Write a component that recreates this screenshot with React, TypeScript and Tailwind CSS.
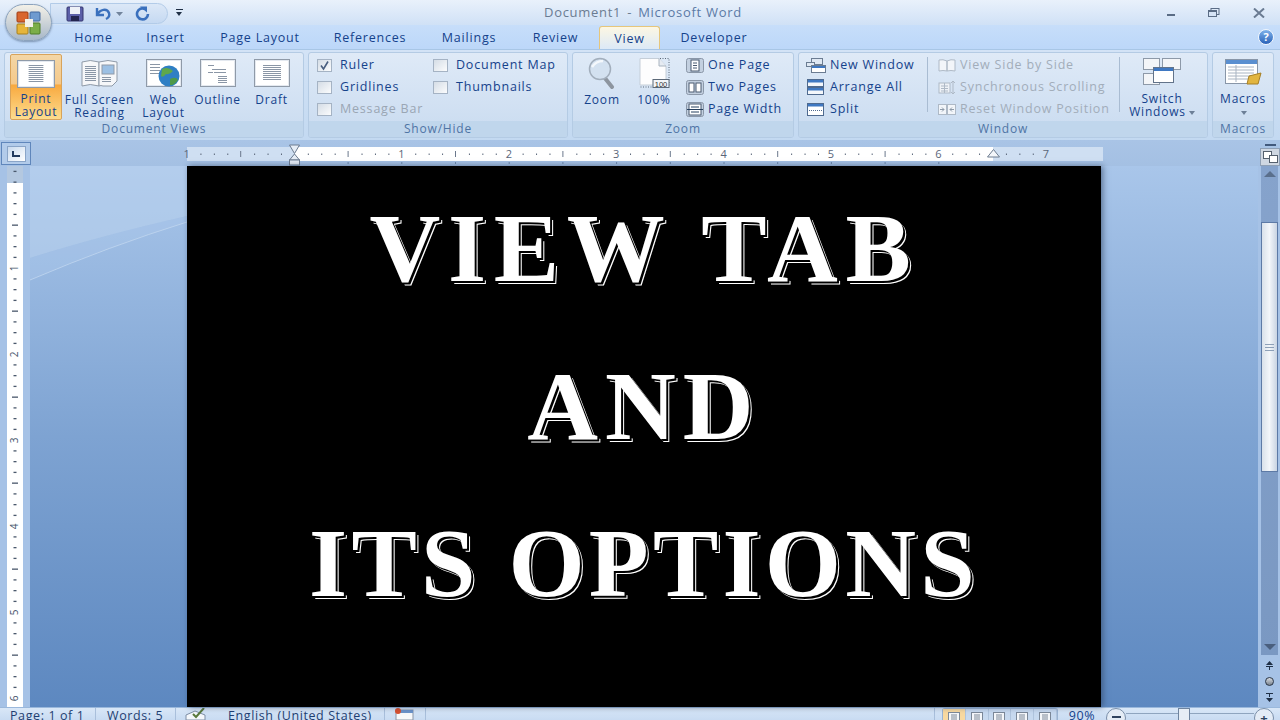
import React from "react";

const F = "font-['Open_Sans','Noto_Sans',sans-serif]";

function Sheet({ children, w = 38, h = 28 }: { children?: React.ReactNode; w?: number; h?: number }) {
  return (
    <svg width={w} height={h} viewBox="0 0 36 28" preserveAspectRatio="none">
      <rect x="0.5" y="0.5" width="35" height="27" fill="#e4e9f0" stroke="#8f9aa8" />
      <rect x="2" y="2" width="32" height="24" fill="#ffffff" />
      {children}
    </svg>
  );
}

function Lines({ x = 10, y = 6, w = 16, n = 8, gap = 2 }: { x?: number; y?: number; w?: number; n?: number; gap?: number }) {
  return (
    <>
      {Array.from({ length: n }, (_, i) => (
        <line key={i} x1={x} x2={x + w} y1={y + i * gap + 0.5} y2={y + i * gap + 0.5} stroke="#8a96a6" strokeWidth="1" />
      ))}
    </>
  );
}

function Caret() {
  return <span className="inline-block align-middle ml-[3px] w-0 h-0 border-l-[3.5px] border-r-[3.5px] border-t-[4px] border-l-transparent border-r-transparent border-t-[#6d7f97]" />;
}

function BigBtn({ icon, lines, active, w }: { icon: React.ReactNode; lines: React.ReactNode[]; active?: boolean; w: string }) {
  return (
    <div
      className={`${w} h-[66px] flex flex-col items-center shrink-0 rounded-[2px] ${
        active ? "bg-[linear-gradient(180deg,#f3d6a6_0%,#f5c98a_45%,#f8a93f_47%,#fddc8e_100%)] border border-[#d8a35a]" : ""
      }`}
    >
      <div className="h-[34px] mt-[2px] flex items-center justify-center">{icon}</div>
      <div className={`text-[12px] leading-[13px] text-center text-[#15428b] whitespace-nowrap ${active ? "mt-[1px]" : "mt-[3px]"}`}>
        {lines.map((l, i) => (
          <div key={i}>{l}</div>
        ))}
      </div>
    </div>
  );
}

function Group({ label, w, children }: { label: string; w: string; children: React.ReactNode }) {
  return (
    <div className={`${w} h-[86px] shrink-0 rounded-[3px] border border-[#b4cbe4] bg-gradient-to-b from-[#dfeaf7] to-[#c9dbf0] flex flex-col overflow-hidden`}>
      <div className="flex-1 flex min-h-0">{children}</div>
      <div className="h-[16px] bg-[#c0d6ec] text-center text-[12px] leading-[16px] text-[#4f74a5]">{label}</div>
    </div>
  );
}

function Check({ label, checked, disabled }: { label: string; checked?: boolean; disabled?: boolean }) {
  return (
    <div className="h-[22px] flex items-center gap-[8px]">
      <div className="w-[15px] h-[13px] border border-[#a5b3c4] bg-gradient-to-br from-[#d5dde6] to-[#fbfcfd] flex items-center justify-center">
        {checked && (
          <svg width="11" height="11" viewBox="0 0 11 11">
            <path d="M2 5.5 L4.5 9 L9 1.5" fill="none" stroke="#4a5f80" strokeWidth="1.6" />
          </svg>
        )}
      </div>
      <span className={`text-[12.5px] whitespace-nowrap ${disabled ? "text-[#9aa6b4]" : "text-[#15428b]"}`}>{label}</span>
    </div>
  );
}

function SmallRow({ icon, label, disabled, w = "w-[19px]" }: { icon: React.ReactNode; label: string; disabled?: boolean; w?: string }) {
  return (
    <div className="h-[22px] flex items-center gap-[4px]">
      <div className={`${w} h-[18px] flex items-center justify-center`}>{icon}</div>
      <span className={`text-[12.5px] whitespace-nowrap ${disabled ? "text-[#a2adba]" : "text-[#15428b]"}`}>{label}</span>
    </div>
  );
}

function Tab({ label, active, w }: { label: string; active?: boolean; w: string }) {
  return (
    <div
      className={`${w} h-[23px] text-center text-[12.5px] text-[#15428b] shrink-0 ${
        active ? "bg-gradient-to-b from-[#fdf7e3] to-[#dce9f7] border border-b-0 border-[#e6c67c] rounded-t-[3px] leading-[23px] ml-[5px]" : "leading-[24px]"
      }`}
    >
      {label}
    </div>
  );
}

function HRuler() {
  const items: React.ReactNode[] = [];
  const inch = 107.4;
  for (let i = 0; i <= 64; i++) {
    const x = i * (inch / 8);
    if (x > 905) break;
    if (i % 8 === 0) {
      const n = i / 8;
      if (n !== 1) {
        items.push(
          <text key={i} x={x} y="10.5" fontSize="11" fill="#5a6679" textAnchor="middle" fontFamily="Open Sans">
            {n === 0 ? 1 : n - 1}
          </text>
        );
      }
    } else if (i % 4 === 0) {
      items.push(<line key={i} x1={x} x2={x} y1="4" y2="10" stroke="#6b788c" />);
    } else {
      items.push(<rect key={i} x={x} y="6.5" width="1" height="1.5" fill="#5a6679" />);
    }
    if (i % 4 === 0 && x > 120 && x < 800) {
      items.push(<line key={`t${i}`} x1={x} x2={x} y1="15" y2="17" stroke="#6b86a8" />);
    }
  }
  return (
    <svg width="916" height="14" viewBox="0 0 916 14" className="block overflow-visible">
      {items}
      <g fill="#e6edf6" stroke="#6d7c90">
        <path d="M102.5 -2 h10 l-5 8.5 z" />
        <path d="M107.5 7 l5 6 h-10 z" />
        <rect x="102.5" y="13" width="10" height="5" />
        <path d="M806.5 2.5 l6 7.5 h-12 z" fill="#f3f6fa" />
      </g>
    </svg>
  );
}

function VRuler() {
  const rows: React.ReactNode[] = [];
  for (let i = -1; i < 50; i++) {
    const y = 15.5 + i * 10.75;
    const mod = ((i % 8) + 8) % 8;
    if (mod === 0 && i > 0) continue;
    rows.push(<rect key={i} x={mod === 4 ? 5 : 6.5} y={y} width={mod === 4 ? 6 : 3} height="1.3" fill="#4a586c" />);
  }
  const nums = [1, 2, 3, 4, 5, 6];
  return (
    <svg width="16" height="541" viewBox="0 0 16 541" className="block">
      <rect x="0" y="0" width="16" height="17" fill="#b4c8e0" />
      <rect x="0" y="17" width="16" height="524" fill="#ffffff" />
      {rows}
      {nums.map((n) => (
        <text key={n} x="8" y={16 + 86 * n} fontSize="10" fill="#45536a" textAnchor="middle" dominantBaseline="middle" fontFamily="Open Sans" transform={`rotate(-90 8 ${16 + 86 * n})`}>
          {n}
        </text>
      ))}
    </svg>
  );
}

export default function App() {
  return (
    <div className={`${F} tracking-[0.8px] w-[1280px] h-[720px] overflow-hidden flex flex-col relative bg-[#6a93c6]`}>
      {/* Title bar */}
      <div className="h-[25px] shrink-0 bg-gradient-to-b from-[#e9f1fb] to-[#d0e1f6] flex items-center relative">
        <div className="w-[544px] shrink-0" />
        <div className="flex-1 text-[13px] tracking-[0.7px] text-[#6b7c92] whitespace-nowrap">
          Document1 <span className="ml-[2px]">-</span> <span className="text-[#5b7aa5] ml-[2px]">Microsoft Word</span>
        </div>
        <div className="flex items-center gap-[33px] pr-[15px]">
          <div className="w-[8px] h-[2px] bg-[#5a6c85] mt-[4px]" />
          <svg width="12" height="10" viewBox="0 0 12 10">
            <rect x="3" y="0.5" width="8" height="6" fill="none" stroke="#5a6c85" />
            <rect x="0.5" y="2.5" width="8" height="6" fill="#d6e4f6" stroke="#5a6c85" />
            <rect x="0.5" y="2" width="8" height="2" fill="#5a6c85" />
          </svg>
          <svg width="12" height="10" viewBox="0 0 12 10">
            <path d="M1 0.5 L11 9.5 M11 0.5 L1 9.5" stroke="#6a7b92" strokeWidth="2" />
          </svg>
        </div>
      </div>

      {/* Tabs */}
      <div className="h-[25px] shrink-0 bg-gradient-to-b from-[#c7defa] to-[#bcd7f9] flex items-end border-b border-[#a8c6e6]">
        <div className="w-[57px] shrink-0" />
        <Tab label="Home" w="w-[73px]" />
        <Tab label="Insert" w="w-[71px]" />
        <Tab label="Page Layout" w="w-[118px]" />
        <Tab label="References" w="w-[102px]" />
        <Tab label="Mailings" w="w-[96px]" />
        <Tab label="Review" w="w-[77px]" />
        <Tab label="View" active w="w-[61px]" />
        <Tab label="Developer" w="w-[108px]" />
        <div className="flex-1" />
        <div className="w-[16px] h-[16px] rounded-full bg-gradient-to-b from-[#7fb2ea] to-[#2a62b8] border border-[#f0f6fd] text-white text-[11px] leading-[14px] tracking-normal text-center font-bold mr-[6px] mb-[4px]">
          ?
        </div>
      </div>

      {/* Ribbon */}
      <div className="h-[90px] shrink-0 bg-gradient-to-b from-[#d3e3f6] to-[#c3d9f1] flex items-start gap-[4px] pl-[4px] pt-[2px]">
        <Group label="Document Views" w="w-[300px]">
          <div className="flex items-start pl-[5px] pt-[1px]">
            <BigBtn
              active
              w="w-[52px]"
              lines={["Print", "Layout"]}
              icon={
                <Sheet>
                  <Lines x={11} y={5} w={14} n={9} />
                </Sheet>
              }
            />
            <BigBtn
              w="w-[75px]"
              lines={["Full Screen", "Reading"]}
              icon={
                <svg width="37" height="28" viewBox="0 0 37 28">
                  <path d="M1 3 Q9 0 18 3 V27 Q9 24 1 27 Z" fill="#f6f7f9" stroke="#8f9aa8" />
                  <path d="M18 3 Q27 0 36 3 V22 L31 27 H22 Q20 26 18 27 Z" fill="#f6f7f9" stroke="#8f9aa8" />
                  <Lines x={4} y={7} w={11} n={8} />
                  <rect x="21" y="6" width="12" height="9" fill="#9cc0e4" stroke="#8f9aa8" />
                  <Lines x={21} y={18} w={9} n={3} />
                </svg>
              }
            />
            <BigBtn
              w="w-[53px]"
              lines={["Web", "Layout"]}
              icon={
                <Sheet w={36}>
                  <Lines x={4} y={5} w={10} n={4} gap={3} />
                  <circle cx="23" cy="17" r="10.5" fill="#2f7fc4" />
                  <path d="M16 10 Q22 7 27 12 Q24 16 20 15 Q17 19 15 17 Z" fill="#5fa84a" />
                  <path d="M24 20 Q30 17 32 21 Q28 27 24 26 Z" fill="#4f9a48" />
                </Sheet>
              }
            />
            <BigBtn
              w="w-[55px]"
              lines={["Outline"]}
              icon={
                <Sheet w={36}>
                  <Lines x={8} y={6} w={6} n={1} />
                  <Lines x={12} y={10} w={14} n={1} />
                  <Lines x={8} y={13} w={5} n={1} />
                  <Lines x={14} y={13} w={12} n={1} />
                  <Lines x={18} y={17} w={9} n={4} />
                </Sheet>
              }
            />
            <BigBtn
              w="w-[53px]"
              lines={["Draft"]}
              icon={
                <Sheet w={36}>
                  <Lines x={9} y={6} w={18} n={8} />
                </Sheet>
              }
            />
          </div>
        </Group>

        <Group label="Show/Hide" w="w-[260px]">
          <div className="pl-[8px] pt-[1px] w-[124px] shrink-0">
            <Check label="Ruler" checked />
            <Check label="Gridlines" />
            <Check label="Message Bar" disabled />
          </div>
          <div className="pt-[1px]">
            <Check label="Document Map" />
            <Check label="Thumbnails" />
          </div>
        </Group>

        <Group label="Zoom" w="w-[222px]">
          <div className="flex items-start pl-[3px] pt-[1px]">
            <BigBtn
              w="w-[52px]"
              lines={["Zoom"]}
              icon={
                <svg width="28" height="32" viewBox="0 0 28 32">
                  <path d="M16 20 L24 30" stroke="#8d959f" strokeWidth="4" strokeLinecap="round" />
                  <circle cx="12" cy="12" r="10.5" fill="#d3e1f0" stroke="#a2aebc" strokeWidth="1.5" />
                  <path d="M4 10 Q8 4 15 4" fill="none" stroke="#f4f8fc" strokeWidth="2.5" />
                </svg>
              }
            />
            <BigBtn
              w="w-[52px]"
              lines={["100%"]}
              icon={
                <svg width="32" height="30" viewBox="0 0 32 30">
                  <path d="M2 0.5 H31 V29 H2" fill="none" stroke="#5b6878" strokeDasharray="1 1.5" />
                  <path d="M2 0.5 H21 L28 8 V27 H2 Z" fill="#fdfdfe" stroke="#c5ced8" />
                  <path d="M21 0.5 V8 H28" fill="#e6ebf2" stroke="#a9b4c0" />
                  <rect x="15" y="21.5" width="16" height="8" fill="#f4f6f9" stroke="#5b6878" />
                  <text x="23" y="28.5" fontSize="7.5" fill="#333" textAnchor="middle" fontFamily="Liberation Sans" className="tracking-normal">
                    100
                  </text>
                </svg>
              }
            />
            <div className="pl-[5px]">
              <SmallRow
                label="One Page"
                icon={
                  <svg width="18" height="15" viewBox="0 0 18 15">
                    <rect x="0.5" y="0.5" width="17" height="14" rx="2" fill="#c3d0e0" stroke="#8a97a8" />
                    <rect x="5" y="2" width="8" height="11" fill="#fff" stroke="#4b5a70" />
                    <path d="M7 5 h4 M7 7.5 h4 M7 10 h4" stroke="#4b5a70" />
                  </svg>
                }
              />
              <SmallRow
                label="Two Pages"
                icon={
                  <svg width="18" height="15" viewBox="0 0 18 15">
                    <rect x="0.5" y="0.5" width="17" height="14" rx="2" fill="#c3d0e0" stroke="#8a97a8" />
                    <rect x="3" y="3" width="5" height="9" fill="#fff" stroke="#4b5a70" />
                    <rect x="10" y="3" width="5" height="9" fill="#fff" stroke="#4b5a70" />
                  </svg>
                }
              />
              <SmallRow
                label="Page Width"
                icon={
                  <svg width="18" height="15" viewBox="0 0 18 15">
                    <rect x="0.5" y="0.5" width="17" height="14" rx="2" fill="#c3d0e0" stroke="#8a97a8" />
                    <rect x="3" y="2" width="12" height="11" fill="#fff" stroke="#4b5a70" />
                    <path d="M1 7.5 h16 M5 5 h8 M5 10 h8" stroke="#27405f" />
                  </svg>
                }
              />
            </div>
          </div>
        </Group>

        <Group label="Window" w="w-[410px]">
          <div className="pl-[6px] pt-[1px] w-[128px] shrink-0">
            <SmallRow
              w="w-[21px]"
              label="New Window"
              icon={
                <svg width="20" height="15" viewBox="0 0 20 15">
                  <rect x="5.5" y="0.5" width="11" height="6" fill="#dfe8f3" stroke="#6b7c92" />
                  <rect x="0.5" y="4.5" width="8" height="4" fill="#dfe8f3" stroke="#6b7c92" />
                  <rect x="5.5" y="7.5" width="14" height="7" fill="#fff" stroke="#6b7c92" />
                  <rect x="6" y="8" width="13" height="2" fill="#3f78c2" />
                </svg>
              }
            />
            <SmallRow
              w="w-[21px]"
              label="Arrange All"
              icon={
                <svg width="17" height="16" viewBox="0 0 17 16">
                  <rect x="0.5" y="0.5" width="16" height="7" fill="#f4f7fb" stroke="#4f6a8f" />
                  <rect x="1" y="1" width="15" height="2.5" fill="#3f78c2" />
                  <rect x="0.5" y="8.5" width="16" height="7" fill="#f4f7fb" stroke="#4f6a8f" />
                  <rect x="1" y="9" width="15" height="2.5" fill="#3f78c2" />
                </svg>
              }
            />
            <SmallRow
              w="w-[21px]"
              label="Split"
              icon={
                <svg width="17" height="13" viewBox="0 0 17 13">
                  <rect x="0.5" y="0.5" width="16" height="12" fill="#fff" stroke="#4f6a8f" />
                  <rect x="1" y="1" width="15" height="2.5" fill="#3f78c2" />
                  <path d="M2 7.5 h13" stroke="#4f6a8f" strokeDasharray="1 1" />
                </svg>
              }
            />
          </div>
          <div className="w-px h-[55px] bg-[#a9bcd2] mt-[4px] shrink-0" />
          <div className="pl-[9px] pt-[1px] w-[191px] shrink-0">
            <SmallRow
              label="View Side by Side"
              disabled
              icon={
                <svg width="18" height="13" viewBox="0 0 18 13">
                  <path d="M1 1 Q5 0 9 2 V12 Q5 11 1 12 Z M9 2 Q13 0 17 1 V12 Q13 11 9 12 Z" fill="#f2f5f9" stroke="#aeb9c6" />
                </svg>
              }
            />
            <SmallRow
              label="Synchronous Scrolling"
              disabled
              icon={
                <svg width="18" height="15" viewBox="0 0 18 15">
                  <rect x="1" y="3" width="11" height="10" fill="#eef2f7" stroke="#aeb9c6" />
                  <path d="M3 6 h7 M3 8.5 h7 M3 11 h7 M6.5 3 v10" stroke="#aeb9c6" />
                  <path d="M15 1 v13 M13 3 l2 -2 l2 2 M13 12 l2 2 l2 -2" fill="none" stroke="#aeb9c6" />
                </svg>
              }
            />
            <SmallRow
              label="Reset Window Position"
              disabled
              icon={
                <svg width="18" height="13" viewBox="0 0 18 13">
                  <rect x="0.5" y="1.5" width="8" height="10" fill="#f2f5f9" stroke="#aeb9c6" />
                  <rect x="9.5" y="1.5" width="8" height="10" fill="#f2f5f9" stroke="#aeb9c6" />
                  <path d="M2 6.5 h4 M4 4.5 l2 2 l-2 2 M16 6.5 h-4 M14 4.5 l-2 2 l2 2" fill="none" stroke="#8d9aa9" />
                </svg>
              }
            />
          </div>
          <div className="w-px h-[55px] bg-[#a9bcd2] mt-[4px] shrink-0" />
          <BigBtn
            w="w-[84px]"
            lines={[
              "Switch",
              <>
                Windows
                <Caret />
              </>,
            ]}
            icon={
              <svg width="38" height="28" viewBox="0 0 38 28">
                <rect x="0.5" y="0.5" width="16" height="11" fill="#f3f5f8" stroke="#8d99a8" />
                <rect x="19.5" y="0.5" width="18" height="11" fill="#f3f5f8" stroke="#8d99a8" />
                <rect x="0.5" y="15.5" width="16" height="11" fill="#f3f5f8" stroke="#8d99a8" />
                <rect x="10.5" y="9.5" width="20" height="15" fill="#fff" stroke="#62738a" />
                <rect x="11" y="10" width="19" height="3" fill="#3f78c2" />
              </svg>
            }
          />
        </Group>

        <Group label="Macros" w="w-[62px]">
          <BigBtn
            w="w-[60px]"
            lines={["Macros", <Caret key="c" />]}
            icon={
              <svg width="37" height="26" viewBox="0 0 37 26">
                <rect x="0.5" y="0.5" width="32" height="24" fill="#fff" stroke="#8896a8" />
                <rect x="1" y="1" width="31" height="4" fill="#5a8fd0" />
                <path d="M3 8 h26 M3 11 h26 M3 14 h26 M3 17 h26 M3 20 h26 M11 6 v17" stroke="#a9b4c2" />
                <path d="M24 17 L36 14 L33 25 H22 Z" fill="#e2b53f" stroke="#a67f25" />
              </svg>
            }
          />
        </Group>
      </div>

      {/* Ruler row */}
      <div className="h-[26px] shrink-0 bg-gradient-to-b from-[#a9c4e6] to-[#a4c0e3] flex relative">
        <div className="w-[187px] shrink-0 pl-[1px] pt-[2px]">
          <div className="w-[30px] h-[23px] border border-[#5f86bb] bg-[#b2cbea] flex items-center justify-center">
            <div className="w-[19px] h-[16px] border border-[#8aa5c8] bg-gradient-to-br from-[#c9daee] to-[#ffffff] flex items-center justify-center">
              <div className="w-[8px] h-[6px] border-l-2 border-b-2 border-[#223a5e]" />
            </div>
          </div>
        </div>
        <div className="w-[916px] shrink-0 h-[14px] mt-[7px] bg-white relative">
          <div className="absolute left-0 top-0 h-full w-[108px] bg-[#cfdff2]" />
          <div className="absolute left-[806px] top-0 h-full w-[110px] bg-[#cfdff2]" />
          <div className="relative">
            <HRuler />
          </div>
        </div>
        <div className="flex-1" />
        <div className="w-[20px] shrink-0 flex flex-col items-center mt-[4px]">
          <div className="w-[11px] h-[2px] bg-[#41597c]" />
          <div className="w-[20px] h-[18px] mt-[2px] bg-[#cfd7e2] border border-[#8fa0b6] flex items-center justify-center">
            <svg width="15" height="12" viewBox="0 0 15 12">
              <rect x="0.5" y="0.5" width="8" height="7" fill="#fff" stroke="#55606e" />
              <rect x="6.5" y="4.5" width="8" height="7" fill="#fff" stroke="#55606e" />
            </svg>
          </div>
        </div>
      </div>

      {/* Main */}
      <div className="flex-1 flex min-h-0 bg-gradient-to-b from-[#a9c6ea] via-[#7ea3d2] to-[#5d88c0] relative">
        <div className="w-[30px] shrink-0 bg-[#a6c2e6] pl-[7px]">
          <VRuler />
        </div>
        <div className="w-[157px] shrink-0 relative">
          <svg width="157" height="125" viewBox="0 0 157 125" className="absolute left-0 top-0">
            <path d="M0 92 Q70 70 157 50 V0 H0 Z" fill="#bcd3ef" opacity="0.55" />
            <path d="M0 92 Q70 70 157 50 V56 Q80 80 0 114 Z" fill="#b4cced" opacity="0.3" />
            <path d="M0 114 Q80 80 157 56" fill="none" stroke="#c6daf1" opacity="0.7" />
          </svg>
        </div>
        <div className="w-[914px] shrink-0 bg-black relative shadow-[2px_0_6px_rgba(40,60,90,0.6)] flex flex-col items-center font-['Liberation_Serif',serif] font-bold text-white">
          <div className="text-[98px] leading-[98px] mt-[33px] tracking-[7.7px] whitespace-nowrap [text-shadow:2px_2px_0_#000,3px_3px_0_#fff]">VIEW TAB</div>
          <div className="text-[98px] leading-[98px] mt-[60px] tracking-[7px] whitespace-nowrap [text-shadow:2px_2px_0_#000,3px_3px_0_#fff]">AND</div>
          <div className="text-[98px] leading-[98px] mt-[59px] tracking-[4.2px] whitespace-nowrap [text-shadow:2px_2px_0_#000,3px_3px_0_#fff]">ITS OPTIONS</div>
        </div>
        <div className="flex-1" />
        {/* Scrollbar */}
        <div className="w-[22px] shrink-0 pl-[3px] pr-[2px] bg-[#a6c2e6] flex flex-col">
          <div className="flex-1 flex flex-col items-center bg-gradient-to-b from-[#86a3cc] to-[#7a98c2] min-h-0">
            <div className="h-[16px] flex items-center">
              <div className="w-0 h-0 border-l-[6px] border-r-[6px] border-b-[6px] border-l-transparent border-r-transparent border-b-[#5a6f8c]" />
            </div>
            <div className="h-[40px]" />
            <div className="w-[17px] h-[250px] bg-gradient-to-r from-[#d9e1ea] via-[#f3f6fa] to-[#c9d4e2] border border-[#5d7aa6] flex items-center justify-center">
              <div className="w-[9px] h-[7px] border-y border-[#8da0b8] flex items-center">
                <div className="w-full h-px bg-[#8da0b8]" />
              </div>
            </div>
            <div className="flex-1" />
            <div className="h-[16px] flex items-center">
              <div className="w-0 h-0 border-l-[6px] border-r-[6px] border-t-[6px] border-l-transparent border-r-transparent border-t-[#4a5f7e]" />
            </div>
          </div>
          <div className="h-[52px] w-full flex flex-col items-center justify-around py-[2px]">
            <svg width="9" height="9" viewBox="0 0 9 9">
              <path d="M4.5 0 L8 4 H1 Z M1 5 H8 V6 H5 V9 H4 V6 H1 Z" fill="#1f2f45" />
            </svg>
            <div className="w-[9px] h-[9px] rounded-full bg-gradient-to-b from-[#d8dde3] to-[#7a838f] border border-[#2a3545]" />
            <svg width="9" height="9" viewBox="0 0 9 9">
              <path d="M4.5 9 L8 5 H1 Z M1 0 H8 V1 H5 V4 H4 V1 H1 Z" fill="#1f2f45" />
            </svg>
          </div>
        </div>
      </div>

      {/* Status bar */}
      <div className="h-[13px] shrink-0 bg-gradient-to-b from-[#d9e7f7] to-[#c8dbf2] border-t border-[#9ab8dc] flex items-start text-[12.5px] leading-[16px] tracking-[0.6px] text-[#1f3f72] overflow-hidden">
        <div className="w-[96px] shrink-0 pl-[10px] border-r border-[#a9bfdb] h-full whitespace-nowrap">Page: 1 of 1</div>
        <div className="w-[80px] shrink-0 pl-[11px] border-r border-[#a9bfdb] h-full whitespace-nowrap">Words: 5</div>
        <div className="w-[52px] shrink-0 pl-[9px] h-full">
          <svg width="22" height="12" viewBox="0 0 22 12">
            <path d="M1 7 L10 3 L20 7 V12 H1 Z" fill="#f4f7fb" stroke="#7e8fa6" />
            <path d="M8 6 L11 9 L19 0" fill="none" stroke="#5a7a3c" strokeWidth="2" />
          </svg>
        </div>
        <div className="w-[157px] shrink-0 border-r border-[#a9bfdb] h-full whitespace-nowrap">English (United States)</div>
        <div className="w-[41px] shrink-0 pl-[9px] border-r border-[#a9bfdb] h-full">
          <svg width="20" height="12" viewBox="0 0 20 12">
            <rect x="2" y="2" width="17" height="10" fill="#f7f8fa" stroke="#8b96a5" />
            <rect x="2" y="2" width="17" height="3" fill="#6c93c9" />
            <circle cx="4" cy="3" r="3" fill="#d8502f" />
          </svg>
        </div>
        <div className="flex-1 h-full border-r border-[#a9bfdb] mr-[7px]" />
        <div className="w-[116px] shrink-0 h-full flex items-start bg-[#c7d9ef] border border-b-0 border-[#9ab3d2] rounded-t-[3px]">
          {[0, 1, 2, 3, 4].map((i) => (
            <div key={i} className={`w-[23px] h-full flex justify-center pt-[3px] border-r border-[#b0c4dd] ${i === 0 ? "bg-[#f8d9a0]" : ""}`}>
              <svg width="12" height="10" viewBox="0 0 12 10">
                <rect x="0.5" y="0.5" width="11" height="9.5" fill="#f5f7fa" stroke="#7c8898" />
                <path d="M3 3 h6 M3 5 h6 M3 7 h6" stroke="#7c8898" />
              </svg>
            </div>
          ))}
        </div>
        <div className="w-[48px] shrink-0 text-center text-[#15428b] whitespace-nowrap">90%</div>
        <div className="w-[20px] h-[20px] rounded-full border border-[#7a8fa9] bg-[#e4ecf6] shrink-0 flex justify-center pt-[7px]">
          <div className="w-[9px] h-[2px] bg-[#2f4360]" />
        </div>
        <div className="w-[128px] shrink-0 h-[6px] border-b border-[#8fa5bf] relative">
          <div className="absolute left-[52px] top-[0px] w-[12px] h-[14px] bg-[#e6edf5] border border-[#6f849f]" />
        </div>
        <div className="w-[20px] h-[20px] rounded-full border border-[#7a8fa9] bg-[#e4ecf6] shrink-0 flex justify-center pt-[3px] mr-[6px]">
          <div className="text-[13px] leading-[12px] font-bold text-[#2f4360] tracking-normal">+</div>
        </div>
      </div>

      {/* Office button + Quick Access Toolbar */}
      <div className="absolute left-[50px] top-[3px] w-[118px] h-[21px] rounded-r-full bg-gradient-to-b from-[#dce8f7] to-[#c5d9f2] border border-[#b2cbe8] flex items-center pl-[15px]">
        <svg width="18" height="16" viewBox="0 0 18 16">
          <rect x="1" y="1" width="16" height="14" rx="1" fill="#5b5fa8" stroke="#34366e" />
          <rect x="4" y="1" width="10" height="7" fill="#eef1f7" />
          <rect x="5" y="10" width="8" height="5" fill="#23254f" />
        </svg>
        <svg width="18" height="15" viewBox="0 0 18 15" className="ml-[10px]">
          <path d="M3 2 V9 H10 M3 9 C6 3 13 2 15 7 C16 10 14 12 12 13" fill="none" stroke="#3a70bd" strokeWidth="2.4" />
        </svg>
        <svg width="7" height="4" viewBox="0 0 7 4" className="ml-[4px]">
          <path d="M0 0 H7 L3.5 4 Z" fill="#72849c" />
        </svg>
        <svg width="16" height="15" viewBox="0 0 16 15" className="ml-[11px]">
          <path d="M11 3 A5.5 5.5 0 1 0 14 8" fill="none" stroke="#3a70bd" strokeWidth="2.6" />
          <path d="M6 0.5 H13 V6.5 Z" fill="#3a70bd" />
        </svg>
      </div>
      <div className="absolute left-[5px] top-[4px] w-[47px] h-[37px] rounded-full bg-gradient-to-b from-[#f4f1e8] to-[#a7b7c8] border border-[#8ca3bd] shadow-[0_1px_2px_rgba(60,80,110,0.5)] flex items-center justify-center">
        <svg width="26" height="26" viewBox="0 0 26 26">
          <rect x="1" y="2" width="11" height="10" rx="1" fill="#d9662e" stroke="#a03d14" />
          <rect x="14" y="2" width="10" height="9" rx="1" fill="#6f9bd0" stroke="#42699e" />
          <rect x="1" y="14" width="11" height="10" rx="1" fill="#e6b53a" stroke="#a8801c" />
          <rect x="14" y="13" width="10" height="11" rx="1" fill="#7cae48" stroke="#4f7c28" />
          <rect x="9" y="9" width="8" height="8" fill="#f4f1e8" />
        </svg>
      </div>
      <div className="absolute left-[176px] top-[9px] w-[7px] flex flex-col gap-[2px]">
        <div className="h-[1px] bg-[#1f2f45]" />
        <div className="w-0 h-0 border-l-[3.5px] border-r-[3.5px] border-t-[4px] border-l-transparent border-r-transparent border-t-[#1f2f45]" />
      </div>
    </div>
  );
}
